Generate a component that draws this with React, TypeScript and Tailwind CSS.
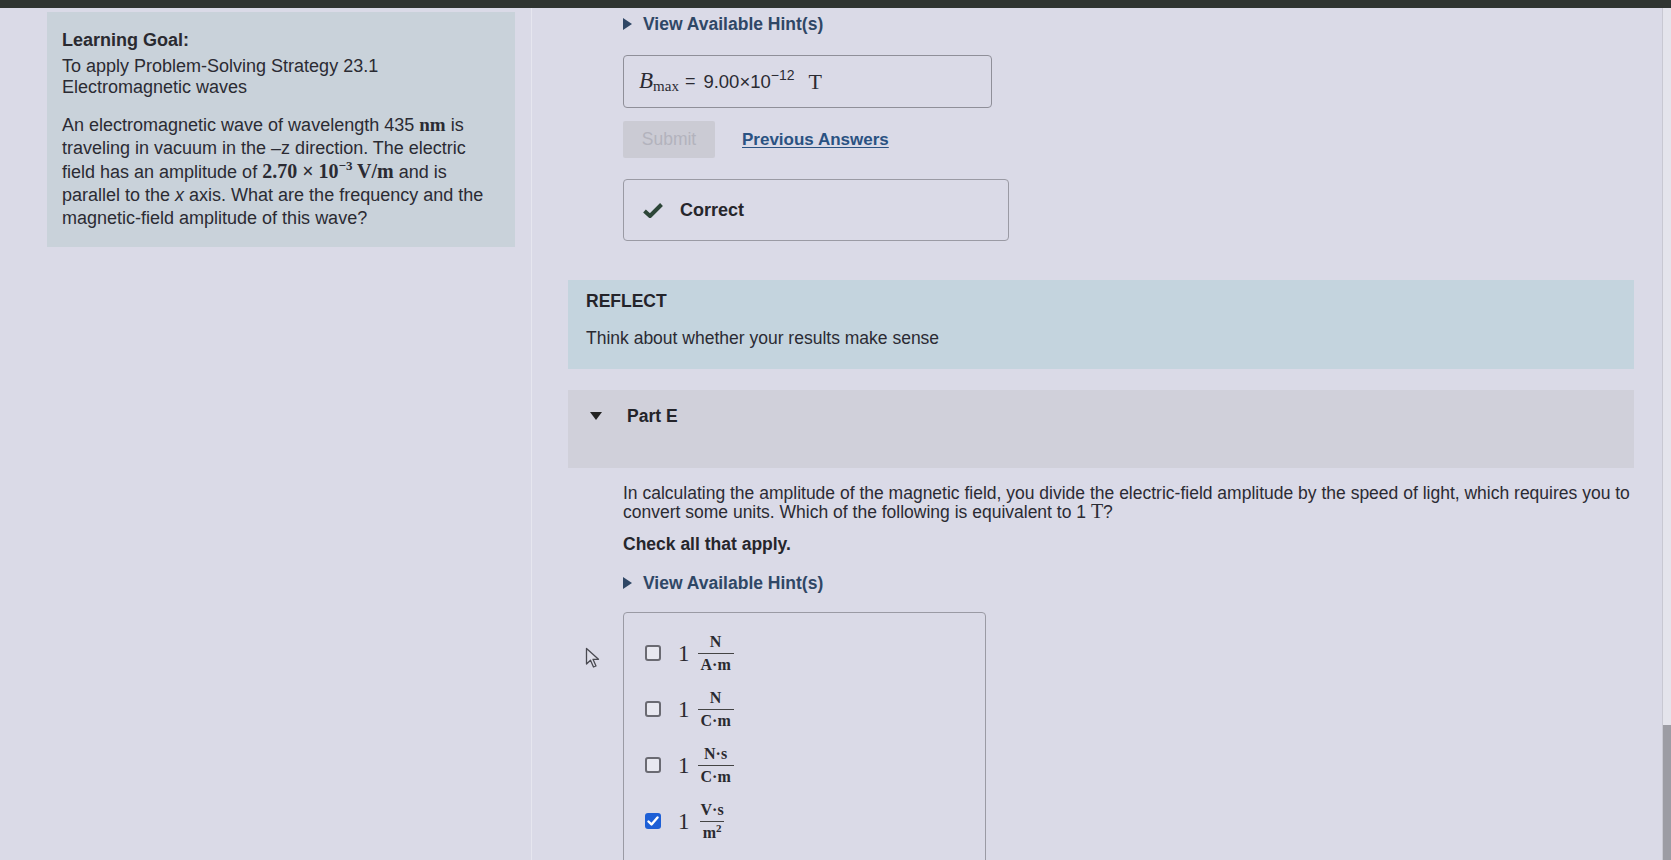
import React from 'react'

const sans = { fontFamily: '"Liberation Sans", Arial, sans-serif' }

function HintToggle() {
  return (
    <div className="flex items-center h-[20px] text-[17.5px] font-bold text-[#2f4766]">
      <svg width="9" height="12" viewBox="0 0 9 12" className="mr-[11px]">
        <polygon points="0,0 9,6 0,12" fill="#2f4766" />
      </svg>
      <span>View Available Hint(s)</span>
    </div>
  )
}

function Frac({ top, bottom }: { top: React.ReactNode; bottom: React.ReactNode }) {
  return (
    <span className="inline-flex flex-col items-center font-['Liberation_Serif'] font-bold text-[16px] leading-none text-[#2a2a30] ml-[8px]">
      <span className="px-[3px] pb-[3px]">{top}</span>
      <span className="border-t border-[#444] px-[3px] pt-[3px]">{bottom}</span>
    </span>
  )
}

function Option({ checked, top, bottom }: { checked?: boolean; top: React.ReactNode; bottom: React.ReactNode }) {
  return (
    <div className="flex items-center h-[56px] pl-[21px]">
      {checked ? (
        <span className="w-[16px] h-[16px] rounded-[3px] bg-[#1d5fd6] flex items-center justify-center">
          <svg width="12" height="10" viewBox="0 0 12 10">
            <path d="M1.5 5.5 L4.5 8.5 L10.5 1.5" stroke="#fff" strokeWidth="2.4" fill="none" strokeLinecap="round" strokeLinejoin="round" />
          </svg>
        </span>
      ) : (
        <span className="w-[16px] h-[16px] rounded-[3px] border-2 border-[#6a6a72] bg-[#e8e8f0]" />
      )}
      <span className="ml-[17px] font-['Liberation_Serif'] text-[23px] leading-none text-[#2a2a30]">1</span>
      <Frac top={top} bottom={bottom} />
    </div>
  )
}

export default function App() {
  return (
    <div className="w-[1671px] h-[860px] overflow-hidden bg-[#dadae7] text-[#2b2b33] flex flex-col" style={sans}>
      <div className="h-[8px] bg-[#2f3431] shrink-0" />
      <div className="flex flex-1 min-h-0">
        {/* left column */}
        <div className="w-[532px] shrink-0 border-r border-[#e6e6ef] pl-[47px] pt-[4px]">
          <div className="w-[468px] bg-[#c9d2da] pl-[15px] pt-[18px] pb-[17px] text-[18px]">
            <div className="font-bold leading-[21px] mb-[5px] text-[#2a2a30]">Learning Goal:</div>
            <div className="leading-[21px]">To apply Problem-Solving Strategy 23.1</div>
            <div className="leading-[21px]">Electromagnetic waves</div>
            <div className="mt-[15px] leading-[23px] whitespace-nowrap">
              An electromagnetic wave of wavelength 435{' '}
              <span className="font-['Liberation_Serif'] font-bold text-[19px]">nm</span> is
              <br />
              traveling in vacuum in the –z direction. The electric
              <br />
              field has an amplitude of{' '}
              <span className="font-['Liberation_Serif'] font-bold text-[20px]">
                2.70 × 10<sup className="text-[13px] -top-[8px]">−3</sup> V/m
              </span>{' '}
              and is
              <br />
              parallel to the <i>x</i> axis. What are the frequency and the
              <br />
              magnetic-field amplitude of this wave?
            </div>
          </div>
        </div>

        {/* right column */}
        <div className="flex-1 pl-[36px] pr-[28px] relative">
          <div className="ml-[55px] mt-[6px]">
            <HintToggle />
            <div className="mt-[21px] w-[369px] h-[53px] border border-[#8f8f99] rounded-[4px] flex items-center pl-[15px]">
              <span className="font-['Liberation_Serif'] italic text-[23px]">B</span>
              <span className="font-['Liberation_Serif'] text-[15px] relative top-[5px]">max</span>
              <span className="text-[18px] ml-[6px]">=</span>
              <span className="text-[18.5px] ml-[8px]">9.00×10</span>
              <sup className="text-[14px] -top-[7px]">−12</sup>
              <span className="font-['Liberation_Serif'] text-[22px] ml-[14px]">T</span>
            </div>
            <div className="mt-[13px] flex items-center">
              <div className="w-[92px] h-[37px] bg-[#cbcbd4] rounded-[2px] flex items-center justify-center text-[17.5px] text-[#b3b3bd]">
                Submit
              </div>
              <span className="ml-[27px] text-[17px] font-bold text-[#2a5282] underline underline-offset-2">Previous Answers</span>
            </div>
            <div className="mt-[21px] w-[386px] h-[62px] border border-[#9a9aa4] rounded-[4px] flex items-center pl-[18px]">
              <svg width="22" height="17" viewBox="0 0 22 17">
                <path d="M2.5 9 L8 14 L19.5 2.5" stroke="#2d4638" strokeWidth="4" fill="none" strokeLinejoin="round" />
              </svg>
              <span className="ml-[16px] text-[18px] font-bold text-[#26262c]">Correct</span>
            </div>
          </div>

          <div className="mt-[39px] h-[89px] bg-[#c4d4de] pl-[18px] pt-[11px]">
            <div className="text-[17.5px] font-bold leading-[20px] text-[#24242a]">REFLECT</div>
            <div className="text-[17.5px] leading-[20px] mt-[17px]">Think about whether your results make sense</div>
          </div>

          <div className="mt-[21px] h-[78px] bg-[#d0d0da] flex items-start pt-[16px] pl-[22px]">
            <div className="flex items-center h-[20px]">
              <svg width="12" height="8" viewBox="0 0 12 8">
                <polygon points="0,0 12,0 6,8" fill="#222" />
              </svg>
              <span className="ml-[25px] text-[17.5px] font-bold text-[#24242a]">Part E</span>
            </div>
          </div>

          <div className="ml-[55px]">
            <div className="mt-[16px] text-[17.5px] leading-[18px] whitespace-nowrap">
              In calculating the amplitude of the magnetic field, you divide the electric-field amplitude by the speed of light, which requires you to
              <br />
              convert some units. Which of the following is equivalent to 1{' '}
              <span className="font-['Liberation_Serif'] text-[20px]">T</span>?
            </div>
            <div className="mt-[13px] text-[17.5px] font-bold leading-[20px] text-[#26262c]">Check all that apply.</div>
            <div className="mt-[19px]">
              <HintToggle />
            </div>
            <div className="mt-[19px] w-[363px] h-[300px] border border-[#9a9aa4] rounded-[4px] pt-[12px]">
              <Option top="N" bottom="A·m" />
              <Option top="N" bottom="C·m" />
              <Option top="N·s" bottom="C·m" />
              <Option checked top="V·s" bottom={<span>m<sup className="text-[11px] -top-[6px]">2</sup></span>} />
            </div>
          </div>

          {/* mouse pointer */}
          <svg width="16" height="22" viewBox="0 0 16 22" className="absolute left-[53px] top-[639px]">
            <path d="M1.5 1.5 L1.5 17 L5.5 13.2 L8.5 20 L11 19 L8 12.3 L13.5 12.3 Z" fill="#dedee9" stroke="#4a4a52" strokeWidth="1.3" strokeLinejoin="round" />
          </svg>
        </div>

        {/* scroll edge */}
        <div className="w-[9px] shrink-0 flex flex-col bg-[#e4e4ec] border-l border-[#c8c8d2]">
          <div className="h-[717px]" />
          <div className="flex-1 bg-[#9c9ca4]" />
        </div>
      </div>
    </div>
  )
}
